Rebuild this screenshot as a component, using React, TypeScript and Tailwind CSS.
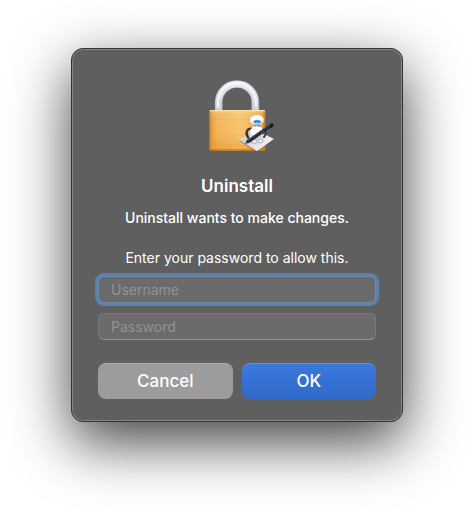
import { useState } from "react"

const LockIcon = () => (
  <svg width="80" height="90" viewBox="0 0 240 270" fill="none" aria-hidden="true">
    <defs>
      <linearGradient id="shackle" x1="54" y1="30" x2="54" y2="122" gradientUnits="userSpaceOnUse">
        <stop offset="0" stopColor="#eceef4" />
        <stop offset="0.5" stopColor="#dde1ea" />
        <stop offset="1" stopColor="#c9ced9" />
      </linearGradient>
      <linearGradient id="body" x1="38" y1="0" x2="204" y2="0" gradientUnits="userSpaceOnUse">
        <stop offset="0" stopColor="#c98426" />
        <stop offset="0.05" stopColor="#e9a548" />
        <stop offset="0.14" stopColor="#f4b65c" />
        <stop offset="0.55" stopColor="#fac873" />
        <stop offset="0.93" stopColor="#f0ae50" />
        <stop offset="1" stopColor="#bd7b25" />
      </linearGradient>
      <linearGradient id="shade" x1="0" y1="120" x2="0" y2="242" gradientUnits="userSpaceOnUse">
        <stop offset="0" stopColor="#fff" stopOpacity="0.15" />
        <stop offset="0.5" stopColor="#e38a18" stopOpacity="0" />
        <stop offset="1" stopColor="#d87c12" stopOpacity="0.35" />
      </linearGradient>
      <linearGradient id="paper" x1="130" y1="200" x2="200" y2="245" gradientUnits="userSpaceOnUse">
        <stop stopColor="#cfcfd3" />
        <stop offset="1" stopColor="#f1f1f3" />
      </linearGradient>
      <radialGradient id="robot" cx="0.45" cy="0.3" r="0.8">
        <stop offset="0.5" stopColor="#fff" />
        <stop offset="1" stopColor="#a9b0bd" />
      </radialGradient>
    </defs>

    {/* shackle */}
    <path d="M65 122V97A55 55 0 0 1 175 97V122" stroke="#a9aebb" strokeWidth="23" />
    <path d="M65 122V97A55 55 0 0 1 175 97V122" stroke="url(#shackle)" strokeWidth="19" />
    <path d="M63 112V97A57 57 0 0 1 177 97V112" stroke="#fff" strokeOpacity="0.75" strokeWidth="6" />

    {/* body */}
    <rect x="37" y="120" width="168" height="122" rx="4" fill="url(#body)" />
    <rect x="37" y="120" width="168" height="122" rx="4" fill="url(#shade)" />
    <path
      d="M42 134H200M42 149H200M42 164H200M42 179H200M42 194H200M42 209H200M42 224H200"
      stroke="#d98f30"
      strokeOpacity="0.18"
      strokeWidth="2"
    />
    <path d="M39 122H203" stroke="#ffe2a4" strokeWidth="4" />
    <path d="M39 240H203" stroke="#a96813" strokeWidth="3" />

    {/* paper */}
    <path d="M126 212L180 247L231 210L181 184Z" fill="#55402a" fillOpacity="0.45" />
    <path d="M127 209L180 243L230 207L181 182Z" fill="url(#paper)" stroke="#f4f4f5" />

    {/* robot */}
    <path d="M162 176C148 176 145 192 154 203" stroke="#34343d" strokeWidth="7" strokeLinecap="round" />
    <path d="M198 178C208 184 208 194 201 201" stroke="#34343d" strokeWidth="6" strokeLinecap="round" />
    <path d="M173 162H188V174H173Z" fill="#292b34" />
    <ellipse cx="180" cy="187" rx="21" ry="19" fill="url(#robot)" />
    <ellipse cx="172" cy="214" rx="9" ry="6" fill="#e9ebf0" stroke="#8d929e" strokeWidth="2" />
    <ellipse cx="190" cy="213" rx="8" ry="6" fill="#e9ebf0" stroke="#8d929e" strokeWidth="2" />
    <ellipse cx="180" cy="151" rx="21" ry="16" fill="url(#robot)" />
    <path d="M168 153Q180 145 193 153Q191 164 180 164Q170 163 168 153Z" fill="#8cc9f2" />
    <path d="M170 154Q180 148 191 154L189 159Q180 154 172 159Z" fill="#2f7fc4" />

    {/* pen */}
    <path d="M155 214L219 168" stroke="#282b39" strokeWidth="11" />
    <path d="M216 164L226 159L231 167L222 175Z" fill="#171923" />
    <path d="M154 209L218 164" stroke="#717788" strokeWidth="2" />
    <path d="M144 221L151 208L159 218Z" fill="#30323c" />
    <circle cx="198" cy="188" r="5" fill="#4a4d59" />
  </svg>
)

const Field = ({ label, type, value, onChange, className }) => (
  <input
    type={type}
    value={value}
    onChange={(e) => onChange(e.target.value)}
    placeholder={label}
    aria-label={label}
    className={`block w-full h-[27px] rounded-md border bg-[#6b6b6b] px-3 text-sm text-white placeholder:text-[#929292] outline-none ${className}`}
  />
)

const App = () => {
  const [username, setUsername] = useState("")
  const [password, setPassword] = useState("")

  return (
    <main className="min-h-screen bg-white px-4 py-12 font-['Inter',sans-serif]">
      <form
        onSubmit={(e) => e.preventDefault()}
        className="mx-auto w-full max-w-[332px] rounded-xl border border-[#333333] bg-[#5f5f5f] px-[26px] pt-[21px] pb-[22px] text-center text-white shadow-[inset_0_0_0_1px_#858585,0_20px_58px_rgba(0,0,0,0.75)]"
      >
        <div className="flex justify-center">
          <LockIcon />
        </div>
        <h1 className="mt-3.5 text-[17px] leading-6 font-semibold">Uninstall</h1>
        <p className="mt-2.5 text-sm leading-5 font-medium">Uninstall wants to make changes.</p>
        <p className="mt-5 text-sm leading-5">Enter your password to allow this.</p>

        <div className="mt-2 space-y-2.5">
          <Field
            label="Username"
            type="text"
            value={username}
            onChange={setUsername}
            className="border-[#6f8ba6] ring-3 ring-[#5783b2]"
          />
          <Field
            label="Password"
            type="password"
            value={password}
            onChange={setPassword}
            className="border-[#7b7b7b] border-b-[#939393]"
          />
        </div>

        <div className="mt-[23px] grid grid-cols-2 gap-[9px]">
          <button type="button" className="h-9 rounded-lg border-t border-[#adadad] bg-[#9c9c9c] text-[17px] font-medium">
            Cancel
          </button>
          <button
            type="submit"
            className="h-9 rounded-lg border-t border-[#6691dc] bg-linear-to-b from-[#3b79de] to-[#3069c9] text-[17px] font-medium"
          >
            OK
          </button>
        </div>
      </form>
    </main>
  )
}

export default App
